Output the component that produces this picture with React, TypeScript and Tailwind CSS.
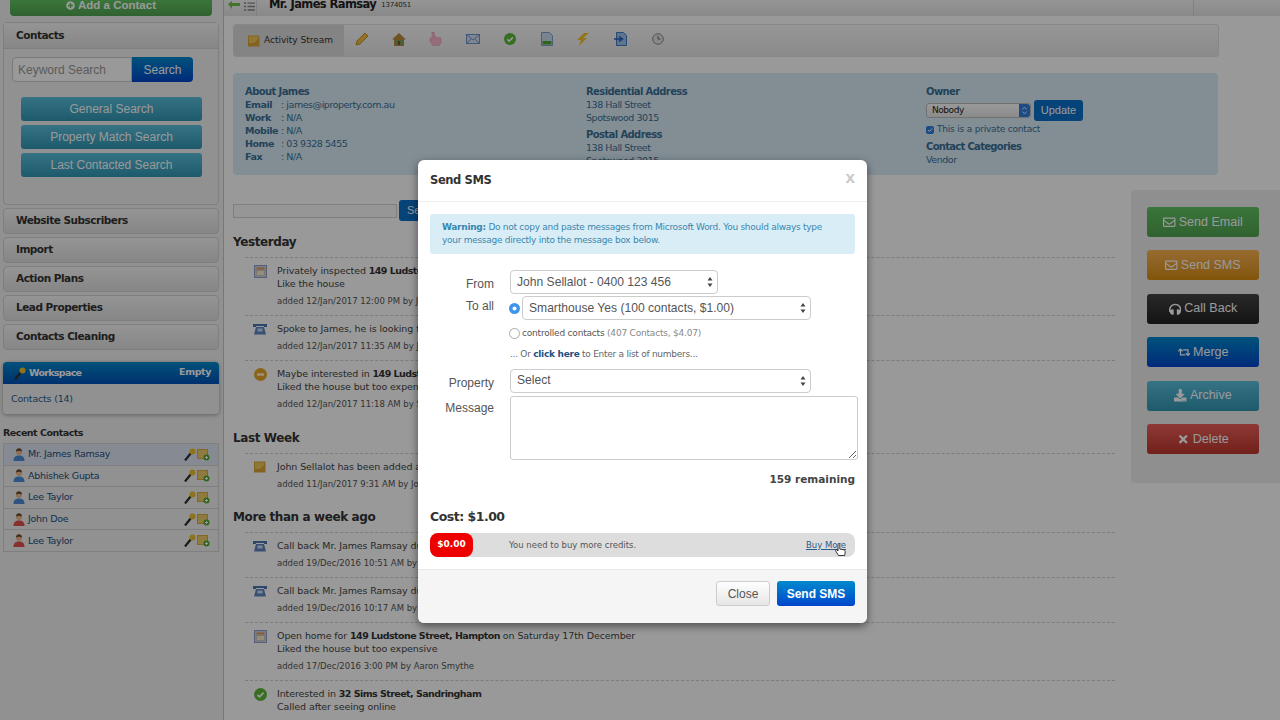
import { FaDownload, FaHeadphones, FaListUl, FaPlusCircle, FaRegEnvelope, FaRetweet, FaTimes } from "react-icons/fa";

const UI = "font-['DejaVu_Sans',sans-serif]";
const HELV = "font-['Liberation_Sans',sans-serif]";

const Calendar = () => (
  <svg width="13" height="13" viewBox="0 0 13 13">
    <rect x="0.5" y="0.5" width="12" height="12" fill="#c9d3ea" stroke="#8f9fc4" />
    <rect x="2.5" y="2.5" width="8" height="2" fill="#e8954e" />
    <rect x="2.5" y="5.5" width="8" height="5" fill="#f4ecd0" stroke="#b7b39a" strokeWidth="0.5" />
  </svg>
);

const Phone = () => (
  <svg width="14" height="12" viewBox="0 0 14 12">
    <path d="M0 1h14v3h-3V3H3v1H0z" fill="#4f76b4" />
    <path d="M3 4h8l2 7.500H1z" fill="#5f86c4" />
    <rect x="4.500" y="5.500" width="5" height="3" fill="#cfdcf0" />
  </svg>
);

const MinusDot = () => (
  <svg width="13" height="13" viewBox="0 0 13 13">
    <circle cx="6.500" cy="6.500" r="6.500" fill="#e4a72b" />
    <rect x="3" y="5.300" width="7" height="2.400" fill="#fff3d0" />
  </svg>
);

const CheckDot = ({ size = 13 }: { size?: number }) => (
  <svg width={size} height={size} viewBox="0 0 13 13">
    <circle cx="6.500" cy="6.500" r="6.500" fill="#5cb838" />
    <path d="M3.500 6.800l2.100 2.100 4-4.200" fill="none" stroke="#fff" strokeWidth="1.700" />
  </svg>
);

const Note = () => (
  <svg width="12" height="12" viewBox="0 0 12 12">
    <rect x="0.500" y="1" width="10.500" height="10" fill="#f1c658" stroke="#d8a63a" />
    <path d="M11 3L6 8H1v3h10z" fill="#dca63a" />
  </svg>
);

const Person = ({ shirt }: { shirt: string }) => (
  <svg width="12" height="13" viewBox="0 0 12 13">
    <path d="M0.500 13c0-4 2-5.500 5.500-5.500S11.500 9 11.500 13z" fill={shirt} />
    <circle cx="6" cy="4" r="3" fill="#edb88c" />
    <path d="M3 3.500C3 1 4.500.300 6 .300S9 1 9 3.500C7.500 2.500 4.500 2.500 3 3.500z" fill="#6b4a2c" />
  </svg>
);

const Wand = () => (
  <svg width="12" height="13" viewBox="0 0 12 13">
    <path d="M1 12.500L7 5" stroke="#2e2e2e" strokeWidth="2.200" />
    <circle cx="8.500" cy="3.500" r="3" fill="#e9c02f" />
  </svg>
);

const NoteAdd = () => (
  <svg width="13" height="13" viewBox="0 0 13 13">
    <rect x="0.500" y="1.500" width="10" height="9" fill="#efcc6a" stroke="#d9ac45" />
    <circle cx="9.500" cy="9.500" r="3" fill="#4fa82e" />
    <path d="M8 9.500h3M9.500 8v3" stroke="#fff" />
  </svg>
);

const B = ({ children }: { children: React.ReactNode }) => (
  <b className="font-bold tracking-[-0.55px] text-[#333]">{children}</b>
);

const tabIcons = [
  <svg key="pencil" width="14" height="14" viewBox="0 0 14 14"><path d="M1 13l1-4 8-8 3 3-8 8z" fill="#f0bd3e" stroke="#c58f22" /></svg>,
  <svg key="home" width="14" height="13" viewBox="0 0 14 13"><path d="M7 0L0 6.500h2V13h10V6.500h2z" fill="#b98a3c" /><rect x="3.500" y="7" width="7" height="5" fill="#6fa55c" /><rect x="6" y="8" width="2" height="4" fill="#7a5628" /></svg>,
  <svg key="hand" width="13" height="14" viewBox="0 0 13 14"><path d="M3 0h2l1 5 6 1v5l-2 3H4L1 9V6h2z" fill="#f6b8c8" stroke="#e39ab0" strokeWidth="0.600" /></svg>,
  <svg key="mail" width="14" height="10" viewBox="0 0 14 10"><rect x="0.500" y="0.500" width="13" height="9" fill="#d5e2f6" stroke="#6f93cc" /><path d="M1 1l6 5 6-5M1 9l4-4M13 9L9 5" fill="none" stroke="#6f93cc" /></svg>,
  <CheckDot key="check" size={12} />,
  <svg key="doc" width="12" height="14" viewBox="0 0 12 14"><path d="M.500.500h8l3 3v10H.500z" fill="#cbdcf2" stroke="#7e9fcc" /><rect x="1.500" y="9" width="9" height="3.500" fill="#4fa82e" /></svg>,
  <svg key="bolt" width="13" height="13" viewBox="0 0 13 13"><path d="M7 0L0 7h4l-2 6 8-8H6l6-5z" fill="#f0c32a" /></svg>,
  <svg key="docblue" width="13" height="14" viewBox="0 0 13 14"><path d="M2.500.500h7l3 3v10h-10z" fill="#9fc2ec" stroke="#3f78c6" /><path d="M0 7h8M5 4.500L8.500 7 5 9.500" fill="none" stroke="#2563b8" strokeWidth="1.500" /></svg>,
  <svg key="clock" width="12" height="12" viewBox="0 0 12 12"><circle cx="6" cy="6" r="5.300" fill="#e4e4e4" stroke="#8a8a8a" /><path d="M6 3v3h2.500" fill="none" stroke="#666" /></svg>,
];

const sections = ["Website Subscribers", "Import", "Action Plans", "Lead Properties", "Contacts Cleaning"];

const recent = [
  { name: "Mr. James Ramsay", shirt: "#4d8ed8", active: true },
  { name: "Abhishek Gupta", shirt: "#4d8ed8", active: false },
  { name: "Lee Taylor", shirt: "#4d8ed8", active: false },
  { name: "John Doe", shirt: "#e0504f", active: false },
  { name: "Lee Taylor", shirt: "#e0504f", active: false },
];

const actions = [
  { label: "Send Email", icon: <FaRegEnvelope />, cls: "from-[#62c462] to-[#51a351]" },
  { label: "Send SMS", icon: <FaRegEnvelope />, cls: "from-[#fbb450] to-[#d98d0c]" },
  { label: "Call Back", icon: <FaHeadphones />, cls: "from-[#444444] to-[#222222]" },
  { label: "Merge", icon: <FaRetweet />, cls: "from-[#0088cc] to-[#0044cc]" },
  { label: "Archive", icon: <FaDownload />, cls: "from-[#5bc0de] to-[#2f96b4]" },
  { label: "Delete", icon: <FaTimes />, cls: "from-[#ee5f5b] to-[#bd362f]" },
];

const aboutRows = [
  ["Email", ": james@iproperty.com.au"],
  ["Work", ": N/A"],
  ["Mobile", ": N/A"],
  ["Home", ": 03 9328 5455"],
  ["Fax", ": N/A"],
];

type Item = { icon: React.ReactNode; text: React.ReactNode; note?: string; meta: string };

const groups: { title: string; mt: string; items: Item[] }[] = [
  {
    title: "Yesterday",
    mt: "mt-[11px]",
    items: [
      { icon: <Calendar />, text: <>Privately inspected <B>149 Ludstone Street, Hampton</B></>, note: "Like the house", meta: "added 12/Jan/2017 12:00 PM by John Sellalot" },
      { icon: <Phone />, text: "Spoke to James, he is looking for a family home", meta: "added 12/Jan/2017 11:35 AM by John Sellalot" },
      { icon: <MinusDot />, text: <>Maybe interested in <B>149 Ludstone Street, Hampton</B></>, note: "Liked the house but too expensive", meta: "added 12/Jan/2017 11:18 AM by Sam Smith" },
    ],
  },
  {
    title: "Last Week",
    mt: "mt-[10px]",
    items: [{ icon: <Note />, text: "John Sellalot has been added as an owner", meta: "added 11/Jan/2017 9:31 AM by John Sellalot" }],
  },
  {
    title: "More than a week ago",
    mt: "mt-[9px]",
    items: [
      { icon: <Phone />, text: "Call back Mr. James Ramsay due today", meta: "added 19/Dec/2016 10:51 AM by John Sellalot" },
      { icon: <Phone />, text: "Call back Mr. James Ramsay due today", meta: "added 19/Dec/2016 10:17 AM by John Sellalot" },
      { icon: <Calendar />, text: <>Open home for <B>149 Ludstone Street, Hampton</B> on Saturday 17th December</>, note: "Liked the house but too expensive", meta: "added 17/Dec/2016 3:00 PM by Aaron Smythe" },
      { icon: <CheckDot />, text: <>Interested in <B>32 Sims Street, Sandringham</B></>, note: "Called after seeing online", meta: "" },
    ],
  },
];

function Arrows() {
  return (
    <svg className="absolute right-[4px] top-1/2 -translate-y-1/2" width="6" height="11" viewBox="0 0 6 11">
      <path d="M3 0.500L5.500 4H.500zM3 10.500L.500 7h5z" fill="#444" />
    </svg>
  );
}

function ModalSelect({ value, width }: { value: string; width: string }) {
  return (
    <div className={`relative h-[24px] ${width} shrink-0 rounded border border-[#ccc] bg-white pl-[6px] flex items-center text-[12.100px] text-[#555] whitespace-nowrap ${HELV}`}>
      {value}
      <Arrows />
    </div>
  );
}

export default function App() {
  return (
    <div className={`relative w-[1280px] h-[720px] overflow-hidden bg-white flex text-[#333] ${UI}`}>
      {/* sidebar */}
      <div className="w-[224px] h-full shrink-0 border-r border-[#c8c8c8] bg-[#f2f2f2] pl-[3px] pr-[4px]">
        <div className={`ml-[7px] w-[202px] h-[16px] pb-[5px] rounded-b bg-gradient-to-b from-[#62c462] to-[#51a351] text-white text-[11.500px] font-bold flex items-center justify-center gap-[3px] ${HELV}`}>
          <FaPlusCircle className="text-[9px]" /> Add a Contact
        </div>
        <div className="mt-[6px] h-[183px] rounded border border-[#d4d4d4]">
          <div className="h-[26px] border-b border-[#d4d4d4] bg-gradient-to-b from-[#f8f8f8] to-[#e0e0e0] pl-[12px] flex items-center text-[10.500px] font-bold tracking-[-0.5px] text-[#333]">Contacts</div>
          <div className={`ml-[8px] mt-[8px] flex h-[25px] ${HELV}`}>
            <div className="w-[120px] border border-[#ccc] rounded-l bg-white pl-[5px] flex items-center text-[12px] text-[#999]">Keyword Search</div>
            <div className="w-[61px] rounded-r bg-gradient-to-b from-[#0088cc] to-[#0044cc] text-white text-[12px] flex items-center justify-center">Search</div>
          </div>
          <div className={`ml-[17px] mt-[15px] w-[181px] flex flex-col gap-[4px] text-white text-[12px] ${HELV}`}>
            {["General Search", "Property Match Search", "Last Contacted Search"].map((s) => (
              <div key={s} className="h-[24px] rounded-[3px] bg-gradient-to-b from-[#5bc0de] to-[#2f96b4] flex items-center justify-center">{s}</div>
            ))}
          </div>
        </div>
        <div className="mt-[3px] flex flex-col gap-[3px]">
          {sections.map((s) => (
            <div key={s} className="h-[26px] rounded border border-[#d4d4d4] bg-gradient-to-b from-[#f8f8f8] to-[#e0e0e0] pl-[12px] flex items-center text-[10.500px] font-bold tracking-[-0.5px] text-[#333]">{s}</div>
          ))}
        </div>
        <div className="mt-[12px] h-[52px] rounded shadow-[0_1px_4px_rgba(0,0,0,0.35)] bg-[#f2f2f2]">
          <div className="h-[22px] rounded-t bg-gradient-to-b from-[#0088cc] to-[#0050b8] pl-[11px] pr-[8px] flex items-center text-white text-[9.500px] font-bold">
            <Wand />
            <span className="ml-[3px] tracking-[-0.7px]">Workspace</span>
            <span className="ml-auto tracking-[-0.4px] -mt-[2px]">Empty</span>
          </div>
          <div className="pl-[8px] pt-[8px] text-[9.500px] text-[#2b5a8c] tracking-[-0.2px]">Contacts (14)</div>
        </div>
        <div className="mt-[12px] h-[15px] text-[9.500px] font-bold tracking-[-0.5px] text-[#333] flex items-center">Recent Contacts</div>
        <div className="mt-[2px] border border-[#d4d4d4] border-b-0">
          {recent.map((r, i) => (
            <div key={i} className={`h-[21.600px] border-b border-[#d4d4d4] pl-[9px] pr-[8px] flex items-center text-[9.500px] tracking-[-0.3px] text-[#24507f] ${r.active ? "bg-[#dfe8f6]" : ""}`}>
              <Person shirt={r.shirt} />
              <span className="ml-[3px]">{r.name}</span>
              <span className="ml-auto flex gap-[1px]"><Wand /><NoteAdd /></span>
            </div>
          ))}
        </div>
      </div>

      {/* main */}
      <div className="flex-1 min-w-0 relative">
        <div className="h-[16px] bg-gradient-to-b from-[#f8f8f8] to-[#e4e4e4] flex items-center overflow-hidden">
          <svg className="ml-[4px] -mt-[6px]" width="12" height="8" viewBox="0 0 12 8"><path d="M0 3l4-3v2h8v3H4v3z" fill="#6cc04a" /></svg>
          <FaListUl className="ml-[4px] -mt-[3px] text-[11px] text-[#888]" />
          <div className="ml-[1px] h-full w-px bg-[#d8d8d8]" />
          <span className="ml-[12px] text-[11.500px] leading-[12px] font-bold tracking-[-0.6px] text-[#222] -mt-[9px]">Mr. James Ramsay</span>
          <span className="ml-[5px] text-[7px] tracking-[-0.2px] text-[#333] -mt-[6px]">1374051</span>
          <div className="ml-auto mr-[86px] h-full w-px bg-[#d8d8d8]" />
        </div>

        <div className="ml-[9px] mr-[61px] mt-[8px] h-[33px] rounded-[3px] border border-[#e2e2e2] bg-gradient-to-b from-[#fafafa] to-[#e8e8e8] flex items-center">
          <div className="w-[110px] h-full bg-[#dcdcdc] rounded-l-[3px] flex items-center pl-[14px] gap-[4px] text-[9px] text-[#333]">
            <Note />
            <span>Activity Stream</span>
          </div>
          <div className="flex items-center -ml-[1px] -mt-[3px]">
            {tabIcons.map((icon, i) => (
              <div key={i} className="w-[37px] flex justify-center">{icon}</div>
            ))}
          </div>
        </div>

        <div className="ml-[9px] mr-[62px] mt-[16px] h-[102px] rounded bg-[#d9edf7] text-[9.500px] tracking-[-0.45px] text-[#3a6f96] pl-[12px] pt-[12px] flex leading-[13px]">
          <div className="w-[341px]">
            <div className="text-[10px] font-bold tracking-[-0.6px]">About James</div>
            {aboutRows.map(([k, v]) => (
              <div key={k} className="flex">
                <span className="w-[36px] font-bold">{k}</span>
                <span>{v}</span>
              </div>
            ))}
          </div>
          <div className="w-[340px]">
            <div className="text-[10px] font-bold tracking-[-0.6px]">Residential Address</div>
            <div>138 Hall Street</div>
            <div>Spotswood 3015</div>
            <div className="mt-[4px] text-[10px] font-bold tracking-[-0.6px]">Postal Address</div>
            <div>138 Hall Street</div>
            <div>Spotswood 3015</div>
          </div>
          <div>
            <div className="text-[10px] font-bold tracking-[-0.6px]">Owner</div>
            <div className="mt-[2px] flex items-center gap-[3px]">
              <div className="relative w-[105px] h-[15px] rounded-[3px] border border-[#bbb] bg-gradient-to-b from-[#fff] to-[#e8e8e8] pl-[5px] flex items-center text-[9px] text-[#222]">
                Nobody
                <div className="absolute right-0 top-0 w-[11px] h-full rounded-r-[3px] bg-[#2f7ee0] flex items-center justify-center">
                  <svg width="5" height="9" viewBox="0 0 5 9"><path d="M.5 3.500L2.500 1l2 2.500M.5 5.500l2 2.500 2-2.500" fill="none" stroke="#fff" strokeWidth="0.800" /></svg>
                </div>
              </div>
              <div className={`w-[49px] h-[21px] rounded-[3px] bg-[#0a70c8] text-white text-[11px] tracking-normal flex items-center justify-center ${HELV}`}>Update</div>
            </div>
            <div className="mt-[2px] flex items-center gap-[3px] text-[9px] tracking-[-0.2px]">
              <span className="w-[8px] h-[8px] rounded-[2px] bg-[#2f7ee0] flex items-center justify-center">
                <svg width="6" height="6" viewBox="0 0 6 6"><path d="M1 3l1.500 1.500L5 1.500" fill="none" stroke="#fff" /></svg>
              </span>
              This is a private contact
            </div>
            <div className="mt-[4px] text-[10px] font-bold tracking-[-0.7px]">Contact Categories</div>
            <div>Vendor</div>
          </div>
        </div>

        <div className="ml-[9px] mt-[25px] flex items-center gap-[2px]">
          <div className="w-[164px] h-[14px] border border-[#d4d4d4] bg-[#fafafa]" />
          <div className={`w-[50px] h-[21px] rounded-[3px] bg-[#0a70c8] text-white text-[11px] flex items-center pl-[8px] ${HELV}`}>Search</div>
        </div>

        <div className="ml-[9px] w-[882px]">
          {groups.map((g) => (
            <div key={g.title} className={g.mt}>
              <div className="text-[12px] font-bold tracking-[-0.4px] text-[#333] h-[20px] flex items-center">{g.title}</div>
              <div className="mt-[5px] ml-[12px]">
                {g.items.map((it, i) => (
                  <div key={i} className="border-t border-dashed border-[#cfcfcf] pt-[6px] pb-[7px] pl-[32px] relative text-[9.500px] tracking-[-0.1px] leading-[13px] text-[#444]">
                    <div className="absolute left-[8px] top-[7px] w-[14px] flex justify-center">{it.icon}</div>
                    <div className="whitespace-nowrap">{it.text}</div>
                    {it.note && <div>{it.note}</div>}
                    {it.meta && <div className="mt-[5px] text-[8.500px] tracking-normal text-[#555]">{it.meta}</div>}
                  </div>
                ))}
              </div>
            </div>
          ))}
        </div>

        <div className={`absolute right-0 top-[190px] w-[149px] h-[293px] bg-[#eeeeee] rounded-l-[3px] pl-[16px] pt-[17px] flex flex-col gap-[13.400px] ${HELV}`}>
          {actions.map((a) => (
            <div key={a.label} className={`w-[112px] h-[30px] rounded-[3px] bg-gradient-to-b ${a.cls} text-white text-[12.500px] flex items-center justify-center gap-[3px]`}>
              {a.icon}
              {a.label}
            </div>
          ))}
        </div>
      </div>

      {/* backdrop */}
      <div className="absolute inset-0 bg-black/40" />

      {/* Send SMS modal */}
      <div className="absolute left-[418px] top-[160px] w-[449px] h-[463px] rounded-[6px] bg-white shadow-[0_3px_9px_rgba(0,0,0,0.5)] flex flex-col">
        <div className="h-[42px] shrink-0 border-b border-[#eeeeee] px-[12px] flex items-center justify-between">
          <span className="text-[11.500px] font-bold tracking-[-0.4px] text-[#333]">Send SMS</span>
          <span className={`-mt-[5px] text-[17px] font-bold text-[#c8c8c8] ${HELV}`}>x</span>
        </div>
        <div className="px-[12px] pt-[12px] flex-1">
          <div className="h-[40px] rounded-[3px] bg-[#d9edf7] px-[12px] flex flex-col justify-center text-[9px] tracking-[-0.28px] leading-[13px] text-[#3a87ad] whitespace-nowrap">
            <div><b>Warning:</b> Do not copy and paste messages from Microsoft Word. You should always type</div>
            <div>your message directly into the message box below.</div>
          </div>

          <div className={`mt-[16px] flex text-[12px] text-[#555] ${HELV}`}>
            <div className="w-[64px] shrink-0 pt-[7px] text-right leading-[14px]">From</div>
            <div className="ml-[16px]"><ModalSelect value="John Sellalot - 0400 123 456" width="w-[208px]" /></div>
          </div>
          <div className={`mt-[2px] flex text-[12px] text-[#555] ${HELV}`}>
            <div className="w-[64px] shrink-0 pt-[3px] text-right leading-[14px]">To all</div>
            <div className="ml-[16px] flex items-center gap-[2px]">
              <svg className="ml-[-1px]" width="11" height="11" viewBox="0 0 11 11"><circle cx="5.500" cy="5.500" r="5.500" fill="#3f95ea" /><circle cx="5.500" cy="5.500" r="2" fill="#fff" /></svg>
              <ModalSelect value="Smarthouse Yes (100 contacts, $1.00)" width="w-[289px]" />
            </div>
          </div>
          <div className="ml-[79px] mt-[7px] flex items-center gap-[2px] text-[9px] tracking-[-0.2px] text-[#555]">
            <span className="w-[11px] h-[11px] rounded-full border border-[#aaa] bg-white" />
            <span>controlled contacts <span className="text-[#888]">(407 Contacts, $4.07)</span></span>
          </div>
          <div className="ml-[80px] mt-[7px] text-[9px] tracking-[-0.27px] text-[#666] leading-[12px]">
            ... Or <b className="text-[#24507f]">click here</b> to Enter a list of numbers...
          </div>
          <div className={`mt-[9px] flex text-[12px] text-[#555] ${HELV}`}>
            <div className="w-[64px] shrink-0 pt-[7px] text-right leading-[14px]">Property</div>
            <div className="ml-[16px]"><ModalSelect value="Select" width="w-[301px]" /></div>
          </div>
          <div className={`mt-[3px] flex text-[12px] text-[#555] ${HELV}`}>
            <div className="w-[64px] shrink-0 pt-[5px] text-right leading-[14px]">Message</div>
            <textarea className="ml-[16px] w-[348px] h-[64px] shrink-0 rounded-[3px] border border-[#ccc] bg-white" readOnly />
          </div>
          <div className="mt-[12px] text-right text-[10.500px] font-semibold text-[#444] leading-[14px]">159 remaining</div>
          <div className="mt-[23px] text-[12.500px] font-semibold tracking-[-0.5px] text-[#333] leading-[16px]">Cost: $1.00</div>
          <div className="mt-[8px] relative h-[24px] pt-[1px] rounded-[8px] bg-[#dddddd] flex items-center text-[8.500px] text-[#555]">
            <div className="absolute left-0 top-0 w-[43px] h-full pt-[1px] rounded-[8px] bg-[#ee0000] text-white font-bold text-[9px] flex items-center justify-center">$0.00</div>
            <span className="ml-[79px]">You need to buy more credits.</span>
            <span className="ml-auto mr-[9px] text-[#2b5a8c] underline">Buy More</span>
            <svg className="absolute right-[9px] top-[10px]" width="11" height="14" viewBox="0 0 11 14">
              <path d="M3 1.500c0-1.300 1.800-1.300 1.800 0V6l4 .800c1 .300 1.500 1 1.400 2l-.5 3.700H3.500L.700 8c-.600-1 .600-1.800 1.300-1.100L3 8z" fill="#fff" stroke="#222" strokeWidth="0.900" />
            </svg>
          </div>
        </div>
        <div className={`h-[54px] shrink-0 rounded-b-[6px] border-t border-[#e8e8e8] bg-[#f5f5f5] px-[12px] pt-[11px] flex items-start justify-end gap-[7px] ${HELV}`}>
          <div className="w-[54px] h-[25px] rounded-[3px] border border-[#ccc] bg-gradient-to-b from-white to-[#e6e6e6] text-[12px] text-[#555] flex items-center justify-center">Close</div>
          <div className="w-[78px] h-[25px] rounded-[3px] bg-gradient-to-b from-[#0088cc] to-[#0044cc] text-[12px] font-bold text-white flex items-center justify-center">Send SMS</div>
        </div>
      </div>
    </div>
  );
}
